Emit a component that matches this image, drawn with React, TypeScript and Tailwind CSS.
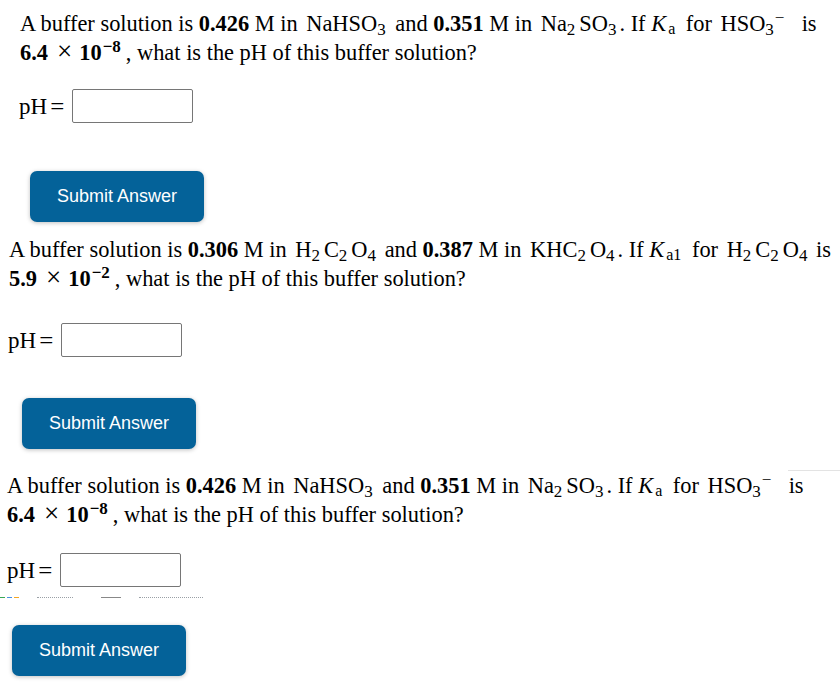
import { FC, ReactNode } from "react";

// subscript inside a chemical formula; `gap` adds the small space MathJax leaves before the next element
const Sub: FC<{ children: ReactNode; gap?: boolean }> = ({ children, gap }) => (
  <span className={`text-[17px] leading-none align-[-4px] ${gap ? "mr-[4px]" : ""}`}>{children}</span>
);

const Sup: FC<{ children: ReactNode }> = ({ children }) => (
  <span className="text-[17px] leading-none align-[8px] ml-[1px]">{children}</span>
);

const Formula: FC<{ children: ReactNode; className?: string }> = ({ children, className = "mr-[3px]" }) => (
  <span className={`ml-[3px] ${className}`}>{children}</span>
);

const Ka: FC<{ sub: string }> = ({ sub }) => (
  <span className="mr-[5px]">
    <i className="pr-[1px]">K</i>
    <span className="text-[16px] leading-none align-[-3px] ml-[1px]">{sub}</span>
  </span>
);

const Sci: FC<{ base: string; exp: string }> = ({ base, exp }) => (
  <b>
    {base}
    <span className="font-normal text-[27px] leading-none ml-[9px] mr-[7px]">×</span>
    10
    <span className="text-[17px] leading-none align-[8px] ml-[1px] mr-[5px]">{exp}</span>
  </b>
);

const PhRow: FC<{ className: string }> = ({ className }) => (
  <div className={`flex items-center ${className}`}>
    <span className="text-[23px] leading-none">pH</span>
    <span className="text-[25px] leading-none ml-[3px]">=</span>
    <input
      type="text"
      aria-label="pH"
      className="ml-[8px] h-[34px] w-[121px] border border-[#767676] rounded-[2px] bg-white outline-none"
    />
  </div>
);

const SubmitButton: FC<{ className: string }> = ({ className }) => (
  <button
    type="button"
    className={`h-[51px] w-[174px] rounded-[7px] bg-[#046299] text-white text-[18px] font-['Liberation_Sans',Arial,sans-serif] shadow-[0_1px_4px_rgba(0,0,0,0.25)] ${className}`}
  >
    Submit Answer
  </button>
);

const SulfiteText: FC = () => (
  <>
    <div className="whitespace-nowrap leading-[29px] h-[29px]">
      A buffer solution is <b>0.426</b> M in{" "}
      <Formula className="mr-[4px]">
        NaHSO<Sub>3</Sub>
      </Formula>{" "}
      and <b>0.351</b> M in{" "}
      <Formula>
        Na<Sub gap>2</Sub>SO<Sub>3</Sub>
      </Formula>
      . If <Ka sub="a" /> for{" "}
      <Formula className="mr-[6px]">
        HSO<Sub>3</Sub>
        <Sup>−</Sup>
      </Formula>
      &nbsp; is
    </div>
    <div className="whitespace-nowrap leading-[29px] h-[29px]">
      <Sci base="6.4" exp="−8" />, what is the pH of this buffer solution?
    </div>
  </>
);

const OxalateText: FC = () => (
  <>
    <div className="whitespace-nowrap leading-[29px] h-[29px]">
      A buffer solution is <b>0.306</b> M in{" "}
      <Formula>
        H<Sub gap>2</Sub>C<Sub gap>2</Sub>O<Sub>4</Sub>
      </Formula>{" "}
      and <b>0.387</b> M in{" "}
      <Formula>
        KHC<Sub gap>2</Sub>O<Sub>4</Sub>
      </Formula>
      . If <Ka sub="a1" /> for{" "}
      <Formula>
        H<Sub gap>2</Sub>C<Sub gap>2</Sub>O<Sub>4</Sub>
      </Formula>{" "}
      is
    </div>
    <div className="whitespace-nowrap leading-[29px] h-[29px]">
      <Sci base="5.9" exp="−2" />, what is the pH of this buffer solution?
    </div>
  </>
);

export default function App() {
  return (
    <div className="w-[840px] h-[686px] overflow-hidden bg-white text-black text-[22.4px] font-['Liberation_Serif','Times_New_Roman',serif]">
      {/* question 1 */}
      <div className="pt-[9px] pl-[20px]">
        <SulfiteText />
        <PhRow className="mt-[22px] -ml-[1px]" />
        <SubmitButton className="mt-[48px] ml-[10px]" />
      </div>

      {/* question 2 */}
      <div className="mt-[13px] pl-[9px]">
        <OxalateText />
        <PhRow className="mt-[30px] -ml-[1px]" />
        <SubmitButton className="mt-[41px] ml-[13px]" />
      </div>

      {/* question 3 */}
      <div className="mt-[22px] pl-[7px] relative">
        <div className="absolute top-[-1px] right-0 w-[52px] h-px bg-[#e3e3e3]" />
        <SulfiteText />
        <PhRow className="mt-[24px]" />
        <div className="flex items-center gap-[2px] mt-[10px] -ml-[7px] h-px">
          <span className="w-[5px] h-px bg-[#3aa757]" />
          <span className="w-[5px] h-px bg-[#4a90e2]" />
          <span className="w-[5px] h-px bg-[#f5a623]" />
          <span className="w-[36px] ml-[16px] h-px border-t border-dotted border-[#9aa0a6]" />
          <span className="w-[20px] ml-[26px] h-px bg-[#888]" />
          <span className="w-[64px] ml-[16px] h-px border-t border-dotted border-[#9aa0a6]" />
        </div>
        <SubmitButton className="mt-[27px] ml-[5px]" />
      </div>
    </div>
  );
}
